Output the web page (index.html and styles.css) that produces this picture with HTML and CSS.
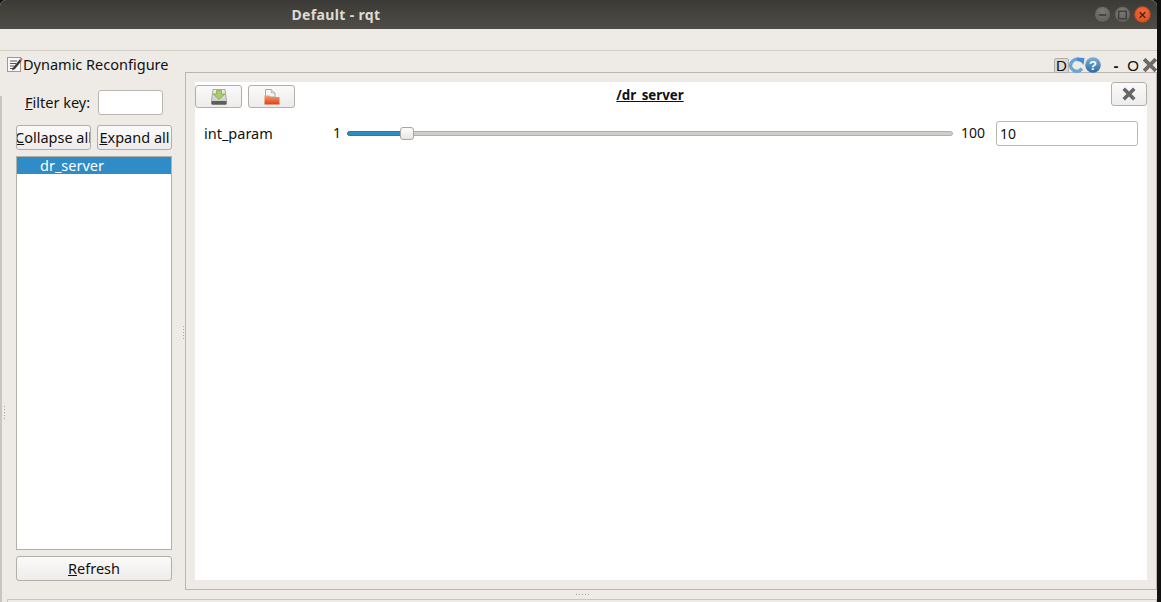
FILE: index.html
```html
<!DOCTYPE html>
<html lang="en">
<head>
<meta charset="utf-8">
<title>Default - rqt</title>
<link rel="stylesheet" href="styles.css">
</head>
<body>
<div class="window">
  <header class="titlebar">
    <div class="wintitle">Default - rqt</div>
    <div class="winbtns">
      <span class="wb"><svg width="16" height="16" viewBox="0 0 16 16"><path d="M4 8h8" stroke="#3a3935" stroke-width="1.4"/></svg></span>
      <span class="wb"><svg width="16" height="16" viewBox="0 0 16 16"><rect x="4" y="4" width="8" height="8" fill="none" stroke="#3a3935" stroke-width="1.3"/></svg></span>
      <span class="wb close"><svg width="16" height="16" viewBox="0 0 16 16"><path d="M5 5l6 6M11 5l-6 6" stroke="#4a2010" stroke-width="1.4"/></svg></span>
    </div>
  </header>
  <div class="menubar"></div>
  <div class="dock">
    <div class="docktitle">
      <svg class="plugicon" width="16" height="16" viewBox="0 0 16 16"><rect x="0.500" y="1.500" width="13" height="14" fill="#fafafa" stroke="#9a9a96"/><path d="M3 5h7M3 7.500h6M3 10h4M3 12.500h3" stroke="#555" stroke-width="1"/><path d="M6 11.500L12.500 3.500l2 1.500-6.500 8-3 1.500z" fill="#3c3c3a"/><path d="M12.500 3.500l1.300-2 2 1.500-1.300 2z" fill="#d070a8"/></svg>
      <span class="plugname">Dynamic Reconfigure</span>
      <div class="dockbtns">
        <span class="dbtn">D</span>
        <svg class="dicon" width="16" height="16" viewBox="0 0 16 16"><path d="M12.800 11.500A6 6 0 1 1 10 2.800" fill="none" stroke="#6ba4dc" stroke-width="3.400"/><path d="M8 0.500l7.500 .5-1 7-2-2.500-4.500-2z" fill="#4a8ad0"/></svg>
        <svg class="dicon" width="16" height="16" viewBox="0 0 16 16"><defs><linearGradient id="hg" x1="0" y1="0" x2="0" y2="1"><stop offset="0" stop-color="#7fb0d8"/><stop offset="1" stop-color="#2a6aa4"/></linearGradient></defs><circle cx="8" cy="8" r="7.800" fill="url(#hg)"/><text x="8" y="13" text-anchor="middle" class="qmark">?</text></svg>
        <span class="dashbtn">-</span>
        <span class="obtn">O</span>
        <svg class="xicon" width="14" height="14" viewBox="0 0 14 14"><path d="M2.500 2.500l9 9M11.500 2.500l-9 9" stroke="#6a6a66" stroke-width="3.800" stroke-linecap="square"/></svg>
      </div>
    </div>
    <div class="dockbody">
      <aside class="left">
        <div class="filter">
          <label class="filterlabel"><u>F</u>ilter key:</label>
          <span class="lineedit filterinput"></span>
        </div>
        <div class="twobtns">
          <button class="btn half"><u>C</u>ollapse all</button>
          <button class="btn half"><u>E</u>xpand all</button>
        </div>
        <div class="tree">
          <div class="treeitem">dr_server</div>
        </div>
        <button class="btn refresh"><u>R</u>efresh</button>
        <i class="grip gripleft"></i>
      </aside>
      <main class="frame">
        <i class="grip gripmid"></i>
        <div class="panel">
          <div class="toprow">
            <button class="btn iconbtn"><svg width="16" height="16" viewBox="0 0 16 16"><defs><linearGradient id="sv" x1="0" y1="0" x2="0" y2="1"><stop offset="0" stop-color="#eeeeea"/><stop offset="1" stop-color="#c4c5c0"/></linearGradient></defs><path d="M2 .5h12l1.500 11v3a1 1 0 0 1-1 1h-13a1 1 0 0 1-1-1v-3z" fill="url(#sv)" stroke="#8d8e8a" stroke-width=".7"/><rect x=".5" y="12" width="15" height="3.500" rx="1" fill="#5d5f5a"/><path d="M5.500 1.500h5v3.500H14L8 10.500 2 5h3.500z" fill="#a9cc6c" stroke="#7ba344" stroke-width=".7"/></svg></button>
            <button class="btn iconbtn"><svg width="16" height="16" viewBox="0 0 16 16"><defs><linearGradient id="fd" x1="0" y1="0" x2="0" y2="1"><stop offset="0" stop-color="#f4a06e"/><stop offset="1" stop-color="#dd3f14"/></linearGradient></defs><path d="M1.500 .5h6l3.500 3.500v4h-9.500z" fill="#f5f5f3" stroke="#a9a9a5"/><path d="M7.500 .5v3.500h3.500" fill="#ddd" stroke="#a9a9a5" stroke-width=".7"/><path d="M.5 6.500h5l1 1.500h9v7.500H.5z" fill="url(#fd)"/></svg></button>
            <div class="paneltitle">/dr_server</div>
            <button class="btn closebtn"><svg width="14" height="14" viewBox="0 0 14 14"><path d="M3 3l8 8M11 3l-8 8" stroke="#666" stroke-width="3.600" stroke-linecap="square"/></svg></button>
          </div>
          <div class="paramrow">
            <span class="paramname">int_param</span>
            <span class="minv">1</span>
            <div class="slider"><div class="fill"></div><div class="handle"></div></div>
            <span class="maxv">100</span>
            <span class="lineedit valinput">10</span>
          </div>
        </div>
      </main>
    </div>
  </div>
  <div class="statusbar"><i class="grip gripbottom"></i></div>
</div>
</body>
</html>
```
FILE: styles.css
```css
* { box-sizing: border-box; }
html, body { margin: 0; padding: 0; height: 100%; }
body {
  background: #111;
  overflow: hidden;
  font-family: "Noto Sans", "Open Sans", sans-serif;
  font-size: 14px;
  color: #111;
}
.window {
  width: 1157px;
  height: 602px;
  background: #eeebe7;
  display: flex;
  flex-direction: column;
  border-radius: 6px 6px 0 0;
  overflow: hidden;
}
.titlebar {
  height: 29px;
  flex: none;
  background: linear-gradient(#3b3a36, #4f4d46);
  display: flex;
  align-items: center;
  position: relative;
}
.wintitle {
  margin-left: 291.500px;
  color: #dfdbd2;
  font-weight: 700;
  font-size: 14px;
  letter-spacing: .35px;
}
.winbtns { margin-left: auto; margin-right: 6px; display: flex; gap: 3px; }
.wb {
  width: 17px; height: 17px; border-radius: 50%;
  background: radial-gradient(circle at 50% 30%, #7a7973, #5c5b55);
  border: 1px solid #45443f;
  display: flex; align-items: center; justify-content: center;
}
.wb.close { background: radial-gradient(circle at 50% 30%, #ee6a38, #dc4f20); border-color: #a8401c; }
.menubar { height: 22px; flex: none; border-bottom: 1px solid #d2cec8; }
.dock { flex: 1; display: flex; flex-direction: column; min-height: 0; }
.docktitle { height: 21px; flex: none; display: flex; align-items: center; padding: 5px 0 0 7px; position: relative; }
.plugicon { flex: none; }
.plugname { font-size: 14.500px; white-space: nowrap; }
.dockbtns { margin-left: auto; display: flex; align-items: center; height: 16px; position: relative; top: 1px; z-index: 1; }
.dbtn {
  width: 15px; height: 15px; background: #dcd9d4; border: 1px solid #b2aea8; border-radius: 2px;
  font-size: 15px; display: flex; align-items: center; justify-content: center;
  font-family: "Liberation Sans", sans-serif;
}
.dicon { flex: none; }
.qmark { font: bold 13px "Liberation Sans", sans-serif; fill: #fff; }
.dashbtn { width: 10px; text-align: center; margin-left: 10px; font-size: 15px; font-weight: 700; font-family: "Liberation Sans", sans-serif; }
.obtn { margin-left: 6px; font-size: 15px; width: 12px; text-align: center; font-family: "Liberation Sans", sans-serif; }
.xicon { margin-left: 4px; flex: none; }
.dockbody { flex: 1; display: flex; min-height: 0; }
.left {
  width: 185px;
  flex: none;
  display: flex;
  flex-direction: column;
  padding: 18px 13px 9px 16px;
  position: relative;
}
.left::before {
  content: "";
  position: absolute;
  left: 0; top: 24px; bottom: 0;
  width: 2px;
  background: #c9c5bf;
}
.filter { display: flex; align-items: center; height: 25px; padding-left: 9px; gap: 7.500px; }
.filterlabel { font-size: 14.500px; white-space: nowrap; position: relative; top: -1px; }
.lineedit { display: block; height: 25px; background: #fff; border: 1px solid #b9b5af; border-radius: 3px; }
.filterinput { width: 65px; }
.twobtns { display: flex; gap: 6px; margin-top: 10px; }
.btn {
  font-family: inherit;
  font-size: 14.500px;
  color: #111;
  padding: 0 0 2px;
  border: 1px solid #b2aea8;
  border-radius: 3px;
  background: linear-gradient(#fbfafa, #eeecea);
  display: flex; align-items: center; justify-content: center;
  white-space: nowrap;
  overflow: hidden;
}
.half { width: 75px; height: 25px; }
.tree { flex: 1; margin-top: 6px; background: #fff; border: 1px solid #b2aea8; }
.treeitem { height: 17px; line-height: 17px; background: #308cc6; color: #fff; padding-left: 23px; font-size: 14.500px; }
.refresh { height: 25px; margin-top: 6px; flex: none; width: 156px; }
.frame {
  flex: 1;
  border: 1px solid #b9b5af;
  padding: 9px;
  position: relative;
  display: flex;
}
.panel { flex: 1; background: #fff; display: flex; flex-direction: column; }
.toprow { display: flex; align-items: flex-start; }
.iconbtn { width: 47px; height: 23px; margin-top: 3px; margin-right: 6px; padding: 0; }
.iconbtn + .iconbtn { margin-right: 0; }
.paneltitle { flex: 1; text-align: center; font-weight: 700; text-decoration: underline; font-size: 13.300px; padding: 4px 106px 0 0; }
.closebtn { width: 36px; height: 24px; padding: 0; }
.paramrow { display: flex; align-items: center; height: 25px; margin-top: 13px; padding-left: 9px; }
.paramname { width: 129px; font-size: 14.500px; padding-bottom: 2px; }
.minv { width: 14px; font-size: 14px; padding-bottom: 2px; }
.slider { width: 606px; height: 5px; background: #cfcdc9; border: 1px solid #b2aea8; border-radius: 3px; position: relative; }
.fill { position: absolute; left: -1px; top: -1px; height: 5px; width: 57px; background: #308cc6; border: 1px solid #2a78ae; border-radius: 3px 0 0 3px; }
.handle { position: absolute; left: 52px; top: -5px; width: 14px; height: 13px; background: linear-gradient(#fdfdfc, #e8e6e3); border: 1px solid #a9a5a0; border-radius: 3px; }
.maxv { margin-left: 8px; width: 35px; font-size: 14px; padding-bottom: 2px; }
.valinput { width: 142px; padding: 0 3px; font-size: 14px; line-height: 23px; }
.statusbar { height: 12px; flex: none; position: relative; }
.statusbar::before { content: ""; position: absolute; left: 0; top: 0; bottom: 0; width: 2px; background: #c9c5bf; }
.statusbar::after { content: ""; position: absolute; left: 7px; right: 0; top: 9px; height: 3px; border: 1px solid #c9c5bf; border-bottom: 0; }
.grip { position: absolute; display: block; }
.gripleft { left: 3px; top: 333px; width: 3px; height: 15px; background: radial-gradient(circle, #a9a5a0 .7px, transparent 1px) 0 0 / 3px 3px; }
.gripmid { left: -4px; top: 252px; width: 3px; height: 15px; background: radial-gradient(circle, #a9a5a0 .7px, transparent 1px) 0 0 / 3px 3px; }
.gripbottom { left: 575px; top: 3px; width: 15px; height: 3px; background: radial-gradient(circle, #a9a5a0 .7px, transparent 1px) 0 0 / 3px 3px; }
```
